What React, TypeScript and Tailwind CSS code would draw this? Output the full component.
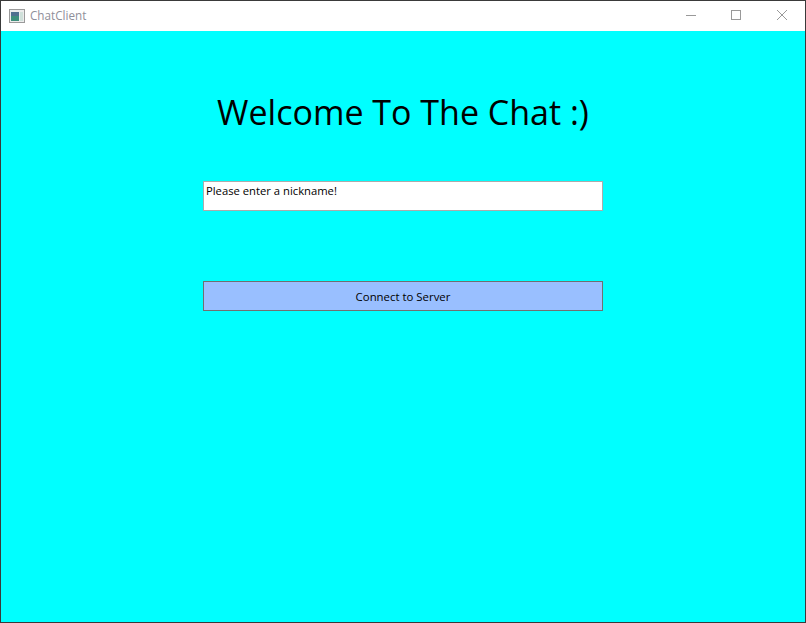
export default function App() {
  return (
    <div className="w-[806px] h-[623px] flex flex-col border border-[#3a3a3a] bg-[#00ffff] overflow-hidden" style={{ fontFamily: '"Open Sans", "Noto Sans", sans-serif' }}>
      <div className="h-[30px] bg-white flex items-center shrink-0">
        <svg width="16" height="14" viewBox="0 0 16 14" className="ml-[8px]">
          <rect x="0.5" y="0.5" width="15" height="13" fill="#ececec" stroke="#9a9a9a" />
          <rect x="2" y="3" width="8" height="9" fill="#3f8f7c" />
          <rect x="2" y="3" width="8" height="4" fill="#50708f" />
          <rect x="11" y="3" width="3" height="9" fill="#cfe0da" />
        </svg>
        <span className="ml-[5px] text-[11.7px] leading-none text-[#8f8f9a]">ChatClient</span>
        <div className="ml-auto flex items-center -mt-[2px]">
          <div className="w-[46px] flex justify-center pl-[1px]">
            <svg width="10" height="10" viewBox="0 0 10 10"><path d="M0 5.5H10" stroke="#999" /></svg>
          </div>
          <div className="w-[46px] flex justify-center">
            <svg width="10" height="10" viewBox="0 0 10 10"><rect x="0.5" y="0.5" width="9" height="9" fill="none" stroke="#999" /></svg>
          </div>
          <div className="w-[46px] flex justify-center">
            <svg width="10" height="10" viewBox="0 0 10 10"><path d="M0 0L10 10M10 0L0 10" stroke="#999" /></svg>
          </div>
        </div>
      </div>
      <div className="flex-1 flex flex-col items-center">
        <h1 className="mt-[56px] h-[50px] text-[34px] leading-[50px] text-black font-normal whitespace-nowrap">Welcome To The Chat :)</h1>
        <div className="mt-[44px] w-[400px] h-[30px] bg-white border border-[#ababab] text-[11.25px] leading-[17px] text-black px-[2px]">Please enter a nickname!</div>
        <button className="mt-[70px] w-[400px] h-[30px] bg-[#99bfff] border border-[#707070] text-[11.4px] pt-[1px] text-black">Connect to Server</button>
      </div>
    </div>
  );
}
